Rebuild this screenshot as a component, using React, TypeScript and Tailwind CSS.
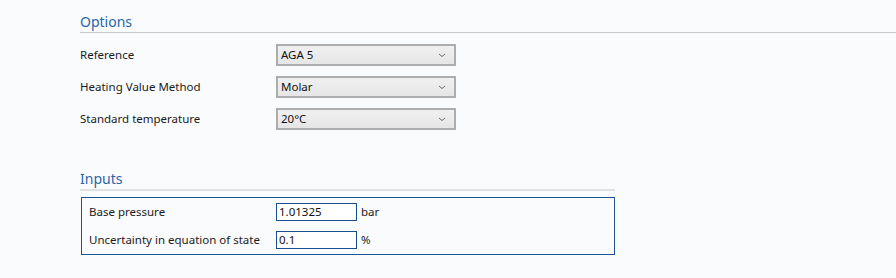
import React from "react";

const font = { fontFamily: '"Segoe UI", "Noto Sans", "Open Sans", sans-serif' };

function Combo({ value }: { value: string }) {
  return (
    <div className="w-[180px] h-[22px] border-2 border-[#adadad] bg-gradient-to-b from-[#f0f0f0] to-[#e6e6e6] flex items-center justify-between pl-[3px] pr-[8px] text-[11.5px] text-[#111]">
      <span>{value}</span>
      <svg width="8" height="5" viewBox="0 0 8 5">
        <path d="M1 1 L4 3.5 L7 1" fill="none" stroke="#666" strokeWidth="1" />
      </svg>
    </div>
  );
}

function Row({ label, value }: { label: string; value: string }) {
  return (
    <div className="flex items-center h-[22px]">
      <div className="w-[196px] text-[11.5px] text-[#1a1a1a]">{label}</div>
      <Combo value={value} />
    </div>
  );
}

function InputRow({ label, value, unit }: { label: string; value: string; unit: string }) {
  return (
    <div className="flex items-center h-[18px]">
      <div className="w-[187px] text-[11.5px] text-[#1a1a1a]">{label}</div>
      <div className="w-[81px] h-[18px] border border-[#1a4f8f] bg-white text-[11.5px] text-[#111] pl-[2px] leading-[16px]">
        {value}
      </div>
      <div className="ml-[4px] text-[11.5px] text-[#1a1a1a]">{unit}</div>
    </div>
  );
}

export default function App() {
  return (
    <div style={font} className="w-[896px] h-[278px] bg-[#fafbfd] pl-[80px] pt-[12px] overflow-hidden">
      <div className="text-[14px] leading-[20px] text-[#2a64ab]">Options</div>
      <div className="h-px bg-[#c9c9c9]" />
      <div className="mt-[11px] flex flex-col gap-[10px]">
        <Row label="Reference" value="AGA 5" />
        <Row label="Heating Value Method" value="Molar" />
        <Row label="Standard temperature" value="20°C" />
      </div>
      <div className="w-[535px] mt-[39px]">
        <div className="text-[14px] leading-[20px] text-[#2a64ab]">Inputs</div>
        <div className="h-[2px] bg-[#e1e1e1]" />
        <div className="mt-[6px] ml-[1px] h-[58px] border-[1.5px] border-[#1c5597] pl-[7px] pt-[5px] flex flex-col gap-[10px]">
          <InputRow label="Base pressure" value="1.01325" unit="bar" />
          <InputRow label="Uncertainty in equation of state" value="0.1" unit="%" />
        </div>
      </div>
    </div>
  );
}
